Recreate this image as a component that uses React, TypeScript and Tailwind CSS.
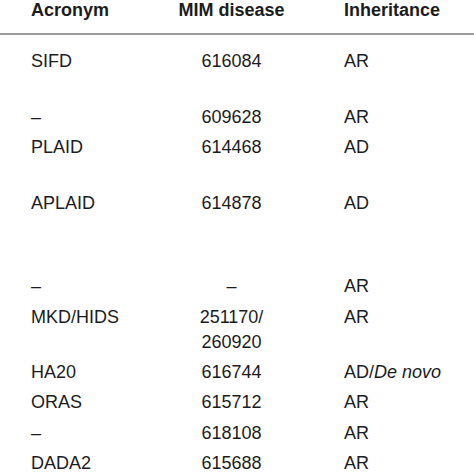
import React from "react";

type Row = {
  acronym: string;
  mim: React.ReactNode;
  inheritance: React.ReactNode;
  height: string;
};

const rows: Row[] = [
  { acronym: "SIFD", mim: "616084", inheritance: "AR", height: "h-[56px]" },
  { acronym: "–", mim: "609628", inheritance: "AR", height: "h-[30px]" },
  { acronym: "PLAID", mim: "614468", inheritance: "AD", height: "h-[56px]" },
  { acronym: "APLAID", mim: "614878", inheritance: "AD", height: "h-[83px]" },
  { acronym: "–", mim: "–", inheritance: "AR", height: "h-[31px]" },
  {
    acronym: "MKD/HIDS",
    mim: (
      <>
        251170/
        <br />
        260920
      </>
    ),
    inheritance: "AR",
    height: "h-[55px]",
  },
  {
    acronym: "HA20",
    mim: "616744",
    inheritance: (
      <>
        AD/<span className="italic">De novo</span>
      </>
    ),
    height: "h-[30px]",
  },
  { acronym: "ORAS", mim: "615712", inheritance: "AR", height: "h-[31px]" },
  { acronym: "–", mim: "618108", inheritance: "AR", height: "h-[30px]" },
  { acronym: "DADA2", mim: "615688", inheritance: "AR", height: "h-[30px]" },
];

export default function App() {
  return (
    <div
      className="w-[474px] h-[474px] overflow-hidden bg-white text-[#1c1c1c]"
      style={{ fontFamily: '"Liberation Sans", Arial, sans-serif' }}
    >
      <div className="h-[35px] border-b-2 border-[#9d9d9d] flex pl-[31px] text-[18px] leading-[20px] font-bold">
        <div className="w-[145px]">Acronym</div>
        <div className="w-[111px] text-center">MIM disease</div>
        <div className="pl-[57px]">Inheritance</div>
      </div>
      <div className="pt-[14px] text-[18px] leading-[25px]">
        {rows.map((row, index) => (
          <div key={index} className={`flex pl-[31px] ${row.height}`}>
            <div className="w-[145px]">{row.acronym}</div>
            <div className="w-[111px] text-center">{row.mim}</div>
            <div className="pl-[57px]">{row.inheritance}</div>
          </div>
        ))}
      </div>
    </div>
  );
}
